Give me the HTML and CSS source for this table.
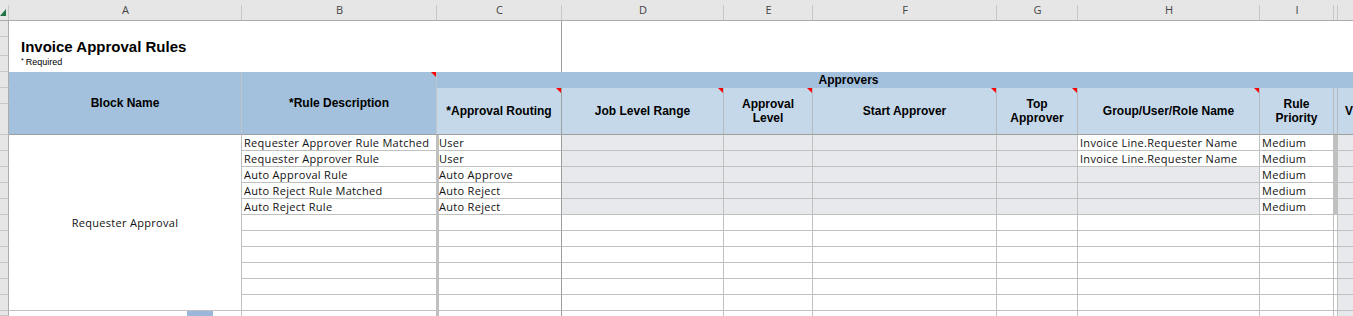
FILE: index.html
```html
<!DOCTYPE html>
<html lang="en">

<head>
    <meta charset="UTF-8">
    <meta name="viewport" content="width=device-width, initial-scale=1.0">
    <title>Invoice Approval Rules</title>
    <link rel="stylesheet" href="styles.css">
</head>

<body>

    <div class="sheet">
        <!-- column letters -->
        <div class="corner">
            <svg width="6" height="7" viewBox="0 0 6 7"><polygon points="6,0 6,7 0,7" fill="#217346" /></svg>
        </div>
        <div class="col-head">A</div>
        <div class="col-head">B</div>
        <div class="col-head">C</div>
        <div class="col-head">D</div>
        <div class="col-head">E</div>
        <div class="col-head">F</div>
        <div class="col-head">G</div>
        <div class="col-head">H</div>
        <div class="col-head">I</div>
        <div class="col-head"></div>
        <div class="col-head"></div>

        <!-- title block -->
        <div class="row-head"></div>
        <div class="title-cell">
            <div class="title">Invoice Approval Rules</div>
            <div class="required"><span class="star">*</span>Required</div>
        </div>
        <div class="title-blank"></div>
        <div class="row-head"></div>
        <div class="row-head"></div>

        <!-- header rows -->
        <div class="row-head"></div>
        <div class="hd head-main">Block Name</div>
        <div class="hd head-main note">*Rule Description</div>
        <div class="hd band band-title">Approvers</div>
        <div class="band band-rest"></div>

        <div class="row-head"></div>
        <div class="hd sub sub-route note">*Approval Routing</div>
        <div class="hd sub note">Job Level Range</div>
        <div class="hd sub note">Approval<br>Level</div>
        <div class="hd sub note">Start Approver</div>
        <div class="hd sub note">Top<br>Approver</div>
        <div class="hd sub note">Group/User/Role Name</div>
        <div class="hd sub">Rule<br>Priority</div>
        <div class="sub"></div>
        <div class="hd sub sub-spare">V</div>

        <div class="row-head"></div>

        <!-- rule rows -->
        <div class="row-head"></div>
        <div class="c block">Requester Approval</div>
        <div class="c">Requester Approver Rule Matched</div>
        <div class="c route">User</div>
        <div class="c locked"></div>
        <div class="c locked"></div>
        <div class="c locked"></div>
        <div class="c locked"></div>
        <div class="c">Invoice Line.Requester Name</div>
        <div class="c">Medium</div>
        <div class="c gap filled"></div>
        <div class="c spare"></div>

        <div class="row-head"></div>
        <div class="c">Requester Approver Rule</div>
        <div class="c route">User</div>
        <div class="c locked"></div>
        <div class="c locked"></div>
        <div class="c locked"></div>
        <div class="c locked"></div>
        <div class="c">Invoice Line.Requester Name</div>
        <div class="c">Medium</div>
        <div class="c gap filled"></div>
        <div class="c spare"></div>

        <div class="row-head"></div>
        <div class="c">Auto Approval Rule</div>
        <div class="c route">Auto Approve</div>
        <div class="c locked"></div>
        <div class="c locked"></div>
        <div class="c locked"></div>
        <div class="c locked"></div>
        <div class="c locked"></div>
        <div class="c">Medium</div>
        <div class="c gap filled"></div>
        <div class="c spare"></div>

        <div class="row-head"></div>
        <div class="c">Auto Reject Rule Matched</div>
        <div class="c route">Auto Reject</div>
        <div class="c locked"></div>
        <div class="c locked"></div>
        <div class="c locked"></div>
        <div class="c locked"></div>
        <div class="c locked"></div>
        <div class="c">Medium</div>
        <div class="c gap filled"></div>
        <div class="c spare"></div>

        <div class="row-head"></div>
        <div class="c">Auto Reject Rule</div>
        <div class="c route">Auto Reject</div>
        <div class="c locked"></div>
        <div class="c locked"></div>
        <div class="c locked"></div>
        <div class="c locked"></div>
        <div class="c locked"></div>
        <div class="c">Medium</div>
        <div class="c gap filled"></div>
        <div class="c spare"></div>

        <!-- empty rows -->
        <div class="row-head"></div>
        <div class="c"></div>
        <div class="c route"></div>
        <div class="c"></div>
        <div class="c"></div>
        <div class="c"></div>
        <div class="c"></div>
        <div class="c"></div>
        <div class="c"></div>
        <div class="c gap"></div>
        <div class="c spare"></div>

        <div class="row-head"></div>
        <div class="c"></div>
        <div class="c route"></div>
        <div class="c"></div>
        <div class="c"></div>
        <div class="c"></div>
        <div class="c"></div>
        <div class="c"></div>
        <div class="c"></div>
        <div class="c gap"></div>
        <div class="c spare"></div>

        <div class="row-head"></div>
        <div class="c"></div>
        <div class="c route"></div>
        <div class="c"></div>
        <div class="c"></div>
        <div class="c"></div>
        <div class="c"></div>
        <div class="c"></div>
        <div class="c"></div>
        <div class="c gap"></div>
        <div class="c spare"></div>

        <div class="row-head"></div>
        <div class="c"></div>
        <div class="c route"></div>
        <div class="c"></div>
        <div class="c"></div>
        <div class="c"></div>
        <div class="c"></div>
        <div class="c"></div>
        <div class="c"></div>
        <div class="c gap"></div>
        <div class="c spare"></div>

        <div class="row-head"></div>
        <div class="c"></div>
        <div class="c route"></div>
        <div class="c"></div>
        <div class="c"></div>
        <div class="c"></div>
        <div class="c"></div>
        <div class="c"></div>
        <div class="c"></div>
        <div class="c gap"></div>
        <div class="c spare"></div>

        <div class="row-head"></div>
        <div class="c"></div>
        <div class="c route"></div>
        <div class="c"></div>
        <div class="c"></div>
        <div class="c"></div>
        <div class="c"></div>
        <div class="c"></div>
        <div class="c"></div>
        <div class="c gap"></div>
        <div class="c spare"></div>

        <!-- next row, cut off by the window -->
        <div class="row-head"></div>
        <div class="c tail"><span class="tail-mark"></span></div>
        <div class="c tail"></div>
        <div class="c tail route"></div>
        <div class="c tail"></div>
        <div class="c tail"></div>
        <div class="c tail"></div>
        <div class="c tail"></div>
        <div class="c tail"></div>
        <div class="c tail"></div>
        <div class="c tail gap"></div>
        <div class="c tail spare"></div>
    </div>

</body>

</html>
```

FILE: styles.css
```css
* {
    box-sizing: border-box;
}

body {
    margin: 0;
    overflow: hidden;
    background-color: #fff;
    font-family: 'Open Sans', sans-serif;
}

.sheet {
    display: grid;
    width: 1353px;
    height: 316px;
    overflow: hidden;
    grid-template-columns: 9px 233px 195px 125px 162px 89px 184px 81px 182px 74px 4px 1fr;
    grid-template-rows: 21px 16px 19px 16px 16px 16px 31px repeat(11, 16px) 1fr;
}

/* column letters bar */
.corner,
.col-head {
    background: linear-gradient(#c8c8c8, #c8c8c8) right bottom / 1px 15px no-repeat, #e6e6e6;
    border-bottom: 1px solid #ababab;
}

.corner {
    padding-top: 9px;
}

.corner svg {
    display: block;
}

.col-head {
    font-size: 11px;
    line-height: 20px;
    color: #444;
    text-align: center;
}

/* row number strip, scrolled out of view */
.row-head {
    background-color: #e6e6e6;
    border-right: 1px solid #ababab;
    border-bottom: 1px solid #c8c8c8;
}

/* title */
.title-cell {
    grid-column: span 3;
    grid-row: span 3;
    border-right: 1px solid #9c9c9c;
    display: flex;
    flex-direction: column;
    justify-content: flex-end;
    padding: 0 0 4px 12px;
    font-family: 'Liberation Sans', Arial, sans-serif;
}

.title {
    font-size: 15px;
    font-weight: bold;
    line-height: 16px;
}

.required {
    font-size: 9px;
    line-height: 11px;
}

.star {
    font-size: 7px;
    vertical-align: 2px;
    margin-right: 2px;
}

.title-blank {
    grid-column: span 8;
    grid-row: span 3;
}

/* header cells */
.hd {
    position: relative;
    display: flex;
    align-items: center;
    justify-content: center;
    text-align: center;
    font-family: 'Liberation Sans', Arial, sans-serif;
    font-size: 12px;
    font-weight: bold;
    line-height: 14px;
    color: #000;
}

.band {
    background-color: #a3c0dd;
}

.band-title {
    grid-column: span 6;
}

.band-rest {
    grid-column: span 3;
}

.head-main {
    grid-row: span 3;
    background-color: #a3c0dd;
    border-right: 1px solid #bfc5cc;
    border-bottom: 1px solid #9f9f9f;
}

.sub {
    grid-row: span 2;
    background-color: #c5d8ea;
    border-right: 1px solid #b5b9bd;
    border-bottom: 1px solid #9f9f9f;
}

.sub-route {
    border-right-color: #a0a0a0;
}

.sub-spare {
    justify-content: flex-start;
    padding-left: 7px;
}

/* comment marker */
.note::after {
    content: "";
    position: absolute;
    top: 0;
    right: 0;
    border-top: 5px solid #ff0000;
    border-left: 5px solid transparent;
}

/* body cells */
.c {
    border-right: 1px solid #c0c0c0;
    border-bottom: 1px solid #c0c0c0;
    padding-left: 2px;
    font-size: 11px;
    line-height: 15px;
    letter-spacing: 0.3px;
    color: #111;
    white-space: nowrap;
    overflow: hidden;
}

.block {
    grid-row: span 11;
    display: flex;
    align-items: center;
    justify-content: center;
    padding-left: 0;
}

.route {
    border-left: 2px solid #c0c0c0;
    border-right-color: #9c9c9c;
    padding-left: 0;
}

.locked,
.spare {
    background-color: #e8e9ec;
}

.gap {
    padding-left: 0;
}

.gap.filled {
    background-color: #c0c0c0;
}

.tail {
    border-bottom: none;
}

.tail-mark {
    display: block;
    width: 26px;
    height: 5px;
    margin-left: 176px;
    background-color: #9ab6da;
}
```
